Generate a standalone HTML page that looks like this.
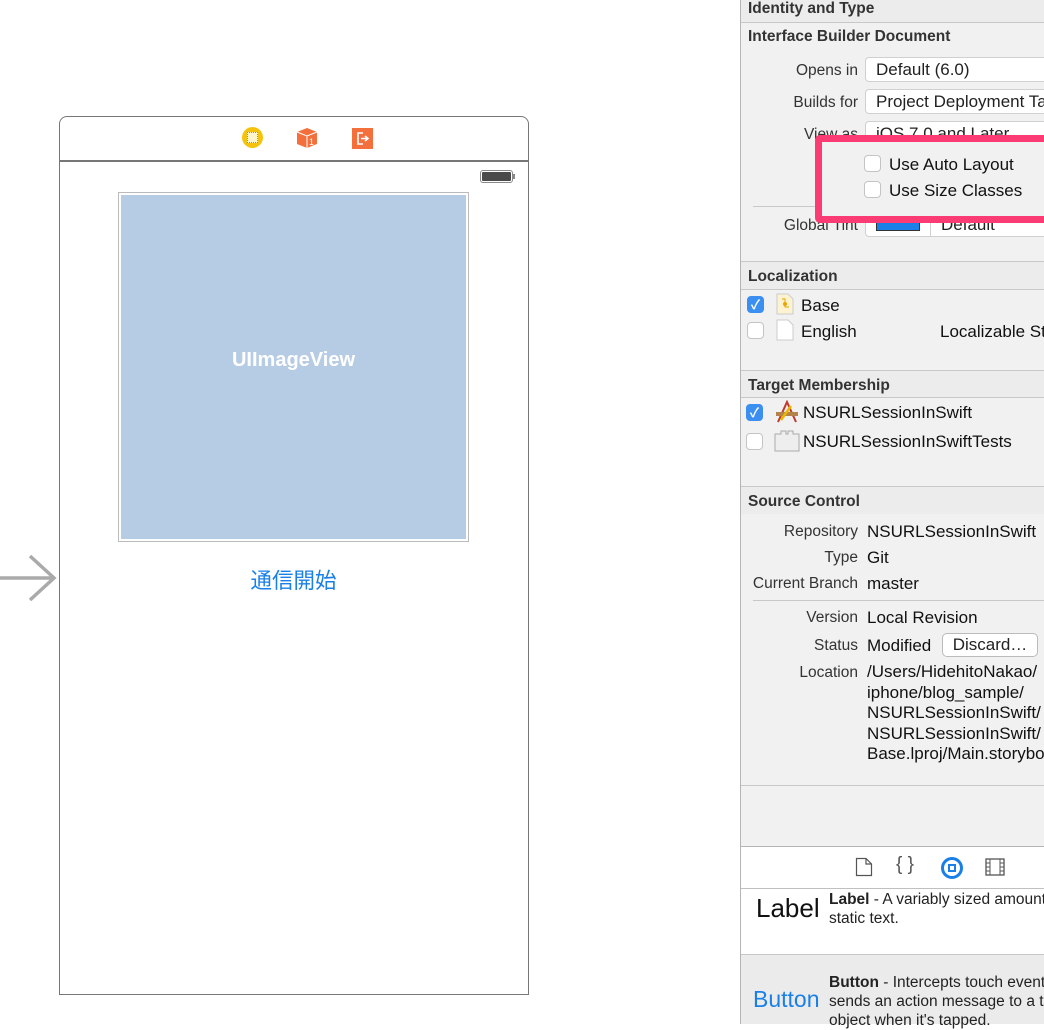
<!DOCTYPE html>
<html><head><meta charset="utf-8"><style>
*{margin:0;padding:0;box-sizing:border-box}
body{width:1044px;height:1024px;overflow:hidden;background:#fff;font-family:"Liberation Sans","Noto Sans CJK JP",sans-serif;position:relative;color:#222}
.a{position:absolute;white-space:nowrap}
.hd{position:absolute;left:741px;width:303px;background:#ececec;font-weight:bold;font-size:15.5px;color:#333;padding-left:7px;border-bottom:1px solid #c8c8c8}
.lb{position:absolute;font-size:15.5px;color:#333;text-align:right;white-space:nowrap}
.v{position:absolute;font-size:17px;color:#111;white-space:nowrap}
.cb{position:absolute;width:17px;height:17px;border:1px solid #c4c4c4;border-radius:4px;background:#fff}
.cbc{position:absolute;width:17px;height:17px;border-radius:4px;background:#3b8ff0;color:#fff;font-size:13px;text-align:center;line-height:17px;font-weight:bold}
.pop{position:absolute;left:865px;width:190px;height:25px;border:1px solid #d0d0d0;border-radius:4px;background:#fff;font-size:17px;padding-left:10px;line-height:24px;white-space:nowrap;overflow:hidden}
</style></head><body>

<div class="a" style="left:59px;top:116px;width:470px;height:879px;border:1.5px solid #777;border-radius:8px 8px 0 0;background:#fff"></div>
<div class="a" style="left:60px;top:160px;width:468px;height:1.5px;background:#777"></div>
<div class="a" style="left:242px;top:127px;width:21px;height:21px;border-radius:50%;background:#f5c30e"></div>
<div class="a" style="left:247px;top:132px;width:11px;height:11px;background:#fff5cc;border:1px dotted #b89400"></div>
<svg class="a" style="left:296px;top:127px" width="22" height="22" viewBox="0 0 22 22"><path d="M11 1 L21 5 V17 L11 21 L1 17 V5Z" fill="#f36f3c"/><path d="M1 5 L11 9 L21 5 M11 9 V21" stroke="#fff" stroke-width="1" fill="none"/><text x="13" y="18" font-size="9" fill="#fff" font-family="Liberation Sans">1</text></svg>
<div class="a" style="left:352px;top:128px;width:21px;height:21px;background:#f36f3c"></div>
<svg class="a" style="left:352px;top:128px" width="21" height="21"><path d="M11 5 H6 V16 H11 M9 10.5 H16 M13 8 L16 10.5 L13 13" stroke="#fff" stroke-width="1.6" fill="none"/></svg>
<div class="a" style="left:480px;top:170px;width:33px;height:13px;border:1.5px solid #888;border-radius:3px;padding:1px"><div style="width:100%;height:100%;background:#4a4a4a;border-radius:1px"></div></div>
<div class="a" style="left:513px;top:174px;width:2px;height:5px;background:#888"></div>
<div class="a" style="left:118px;top:192px;width:351px;height:350px;border:1px solid #bbb;padding:2px;background:#fff"><div style="width:100%;height:100%;background:#b6cce4"></div></div>
<div class="a" style="left:118px;top:349px;width:351px;text-align:center;color:#fff;font-weight:bold;font-size:20px">UIImageView</div>
<div class="a" style="left:118px;top:564px;width:351px;text-align:center;color:#1a80e8;font-size:21.5px">通信開始</div>
<svg class="a" style="left:0;top:552px" width="60" height="52"><path d="M0 26 H54 M30 4 L54 26 L30 48" stroke="#aaa" stroke-width="3.5" fill="none"/></svg>

<div class="a" style="left:740px;top:0;width:304px;height:1024px;background:#f1f1f1;border-left:1.5px solid #b5b5b5"></div>
<div class="hd" style="top:0;height:23px;line-height:17px">Identity and Type</div>
<div class="a" style="left:748px;top:28px;font-weight:bold;font-size:15.5px;color:#333">Interface Builder Document</div>
<div class="lb" style="right:186px;top:62px">Opens in</div>
<div class="pop" style="top:57px">Default (6.0)</div>
<div class="lb" style="right:186px;top:94px">Builds for</div>
<div class="pop" style="top:89px">Project Deployment Target</div>
<div class="lb" style="right:186px;top:126px">View as</div>
<div class="pop" style="top:121px">iOS 7.0 and Later</div>
<div class="a" style="left:753px;top:206px;width:291px;height:1px;background:#c8c8c8"></div>
<div class="lb" style="right:186px;top:217px">Global Tint</div>
<div class="pop" style="top:212px;padding-left:0"><span style="display:inline-block;width:44px;height:13px;background:#1a80e8;border:1px solid #333;margin:5px 10px 0 10px;vertical-align:top"></span><span style="display:inline-block;border-left:1px solid #d0d0d0;padding-left:10px">Default</span></div>
<div class="a" style="left:815px;top:135px;width:240px;height:88px;border:7px solid #fa3b74;border-radius:5px;background:#f1f1f1"></div>
<div class="cb" style="left:864px;top:155px"></div>
<div class="v" style="left:889px;top:155px">Use Auto Layout</div>
<div class="cb" style="left:864px;top:181px"></div>
<div class="v" style="left:889px;top:181px">Use Size Classes</div>

<div class="hd" style="top:261px;height:29px;line-height:30px;border-top:1px solid #c8c8c8">Localization</div>
<div class="cbc" style="left:747px;top:296px">✓</div>
<svg class="a" style="left:776px;top:293px" width="18" height="22"><path d="M1 1 H12 L17 6 V21 H1Z" fill="#fdf3d2" stroke="#ccc"/><circle cx="9" cy="11" r="2" fill="#e6a500"/><path d="M6 6 H9 V14 H13" stroke="#e6a500" fill="none"/></svg>
<div class="v" style="left:801px;top:296px">Base</div>
<div class="cb" style="left:747px;top:322px"></div>
<svg class="a" style="left:776px;top:319px" width="18" height="22"><path d="M1 1 H12 L17 6 V21 H1Z" fill="#fff" stroke="#ccc"/></svg>
<div class="v" style="left:801px;top:322px">English</div>
<div class="v" style="left:940px;top:322px">Localizable Strings</div>

<div class="hd" style="top:370px;height:28px;line-height:30px;border-top:1px solid #c8c8c8">Target Membership</div>
<div class="cbc" style="left:746px;top:404px">✓</div>
<svg class="a" style="left:775px;top:400px" width="24" height="24"><path d="M3 22 L12 2 L21 22" stroke="#c0392b" stroke-width="2" fill="none"/><path d="M1 14 H23" stroke="#b5834a" stroke-width="4"/><path d="M6 20 L16 6" stroke="#e8b600" stroke-width="2.5"/></svg>
<div class="v" style="left:803px;top:403px">NSURLSessionInSwift</div>
<div class="cb" style="left:746px;top:433px"></div>
<svg class="a" style="left:774px;top:430px" width="26" height="22"><path d="M1 4 H7 V1 H12 V4 H14 V1 H19 V4 H25 V21 H1Z" fill="#eee" stroke="#aaa"/></svg>
<div class="v" style="left:803px;top:432px">NSURLSessionInSwiftTests</div>

<div class="hd" style="top:486px;height:28px;line-height:29px;border-top:1px solid #c8c8c8;border-bottom:none">Source Control</div>
<div class="lb" style="right:186px;top:523px">Repository</div><div class="v" style="left:867px;top:522px">NSURLSessionInSwift</div>
<div class="lb" style="right:186px;top:549px">Type</div><div class="v" style="left:867px;top:548px">Git</div>
<div class="lb" style="right:186px;top:575px">Current Branch</div><div class="v" style="left:867px;top:574px">master</div>
<div class="a" style="left:753px;top:600px;width:291px;height:1px;background:#c8c8c8"></div>
<div class="lb" style="right:186px;top:609px">Version</div><div class="v" style="left:867px;top:608px">Local Revision</div>
<div class="lb" style="right:186px;top:637px">Status</div><div class="v" style="left:867px;top:636px">Modified</div>
<div class="a" style="left:942px;top:633px;width:96px;height:24px;border:1px solid #bbb;border-radius:5px;background:#fff;font-size:17px;text-align:center;line-height:22px">Discard…</div>
<div class="lb" style="right:186px;top:664px">Location</div>
<div class="v" style="left:867px;top:662px;line-height:20.5px">/Users/HidehitoNakao/<br>iphone/blog_sample/<br>NSURLSessionInSwift/<br>NSURLSessionInSwift/<br>Base.lproj/Main.storyboard</div>
<div class="a" style="left:741px;top:785px;width:303px;height:1px;background:#c8c8c8"></div>

<div class="a" style="left:741px;top:846px;width:303px;height:43px;background:#fff;border-top:1.5px solid #b5b5b5;border-bottom:1.5px solid #c0c0c0"></div>
<svg class="a" style="left:855px;top:857px" width="18" height="20"><path d="M1.5 1.5 H11 L16.5 7 V18.5 H1.5Z M11 1.5 V7 H16.5" stroke="#555" stroke-width="1.2" fill="none"/></svg>
<div class="a" style="left:896px;top:854px;font-size:19px;color:#555">{ }</div>
<div class="a" style="left:941px;top:857px;width:22px;height:22px;border:3px solid #1a80e8;border-radius:50%"></div>
<div class="a" style="left:948px;top:864px;width:8px;height:8px;border:2px solid #1a80e8"></div>
<svg class="a" style="left:985px;top:858px" width="20" height="18"><rect x="1" y="1" width="18" height="16" fill="none" stroke="#555" stroke-width="1.3"/><path d="M5 1 V17 M15 1 V17 M1 5 H5 M1 9 H5 M1 13 H5 M15 5 H19 M15 9 H19 M15 13 H19" stroke="#555"/></svg>

<div class="a" style="left:741px;top:889px;width:303px;height:65px;background:#fff"></div>
<div class="a" style="left:756px;top:893px;font-size:26px;color:#111">Label</div>
<div class="a" style="left:829px;top:890px;font-size:15.5px;line-height:19px;color:#222"><b>Label</b> - A variably sized amount of<br>static text.</div>
<div class="a" style="left:741px;top:954px;width:303px;height:70px;background:#ebebeb;border-top:1px solid #c8c8c8"></div>
<div class="a" style="left:753px;top:986px;font-size:23px;color:#1a80e8">Button</div>
<div class="a" style="left:829px;top:973px;font-size:15.5px;line-height:19px;color:#222"><b>Button</b> - Intercepts touch events and<br>sends an action message to a target<br>object when it's tapped.</div>
</body></html>
